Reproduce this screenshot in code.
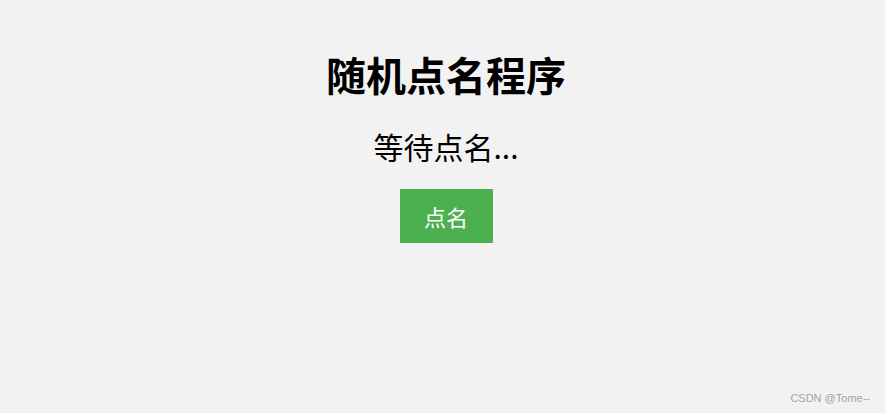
export default function App() {
    return (
        <div
            className="relative min-h-[413px] bg-[#f2f2f2] pl-[7px] pt-[50px] text-center"
            style={{ fontFamily: '"Noto Sans CJK SC", "Noto Sans", sans-serif' }}
        >
            <h1 className="text-[40px] font-bold leading-[48px] text-black">随机点名程序</h1>
            <p className="mt-[30px] text-[30px] leading-[36px] text-black">等待点名...</p>
            <button className="mt-[25px] h-[54px] w-[93px] bg-[#4caf50] text-[22px] text-white">
                点名
            </button>
            <div
                className="absolute bottom-[7px] right-[15px] text-[11px] text-[#a3a3a3]"
                style={{ fontFamily: '"Liberation Sans", Arial, sans-serif' }}
            >
                CSDN @Tome--
            </div>
        </div>
    )
}
